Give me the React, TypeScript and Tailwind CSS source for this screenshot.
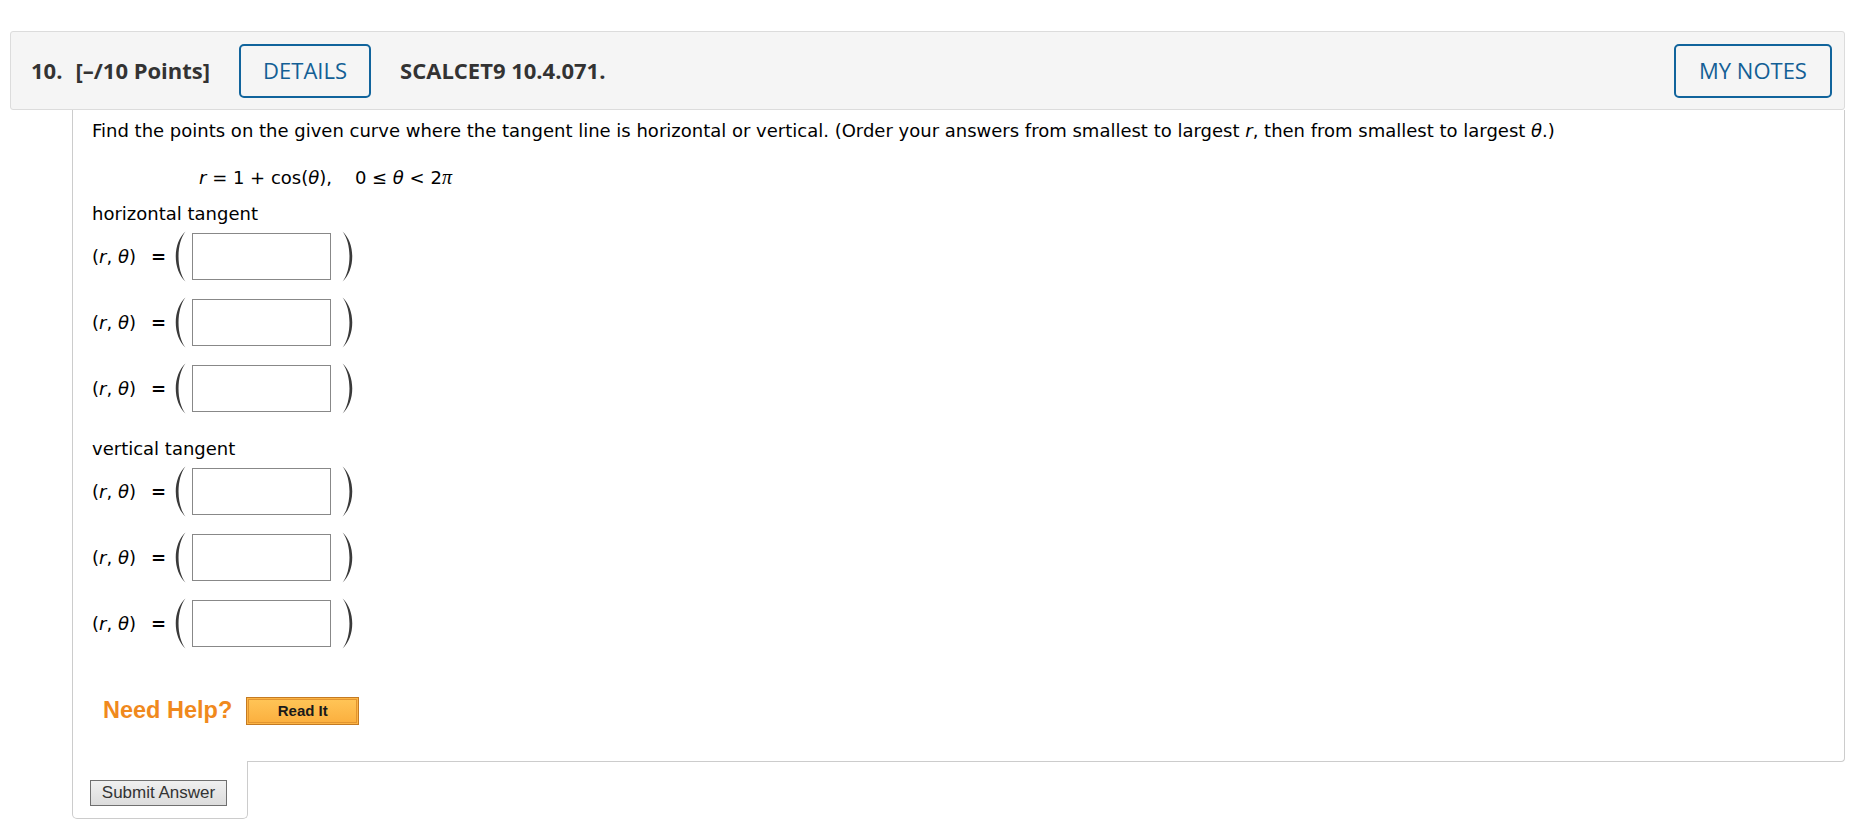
import React from 'react';

// Big stretchy parenthesis drawn as a crescent
const Paren: React.FC<{ side: 'left' | 'right' }> = ({ side }) => (
  <svg width="13" height="51" viewBox="0 0 13 51" className="shrink-0">
    <path
      d="M12.5 0.5 C -0.5 12 -0.5 39 12.5 50.5 C 3.2 39 3.2 12 12.5 0.5 Z"
      fill="#3a3a3a"
      transform={side === 'right' ? 'translate(13 0) scale(-1 1)' : undefined}
    />
  </svg>
);

const AnswerRow: React.FC = () => (
  <div className="flex h-[66px] items-center">
    <span className="w-[47px] whitespace-pre">
      (<i>r</i>, <i>θ</i>)
    </span>
    <span className="ml-[12px] w-[10px] font-bold">=</span>
    <span className="ml-[12px]">
      <Paren side="left" />
    </span>
    <input
      type="text"
      className="ml-[6px] h-[47px] w-[139px] border border-[#888] bg-white outline-none"
    />
    <span className="ml-[11px]">
      <Paren side="right" />
    </span>
  </div>
);

export default function App() {
  return (
    <div className="min-h-[827px] w-full bg-white pl-[10px] pr-[20px] pt-[31px]">
      {/* header bar */}
      <div className="flex h-[79px] items-center rounded-[3px] border border-[#dcdcdc] bg-[#f5f5f5] pl-[20px] pr-[12px] font-['Open_Sans',sans-serif] text-[22px] text-[#333]">
        <span className="font-bold">10.</span>
        <span className="ml-[13px] font-bold">[–/10 Points]</span>
        <button className="ml-[29px] h-[54px] w-[132px] rounded-[5px] border-2 border-[#11649c] font-medium text-[#135f95]">
          DETAILS
        </button>
        <span className="ml-[29px] font-bold">SCALCET9 10.4.071.</span>
        <button className="ml-auto h-[54px] w-[158px] rounded-[5px] border-2 border-[#11649c] font-medium text-[#135f95]">
          MY NOTES
        </button>
      </div>

      {/* question body */}
      <div className="ml-[62px] font-['DejaVu_Sans',sans-serif] text-[18px] text-black">
        <div className="rounded-br-[4px] border-x border-b border-[#cccccc] pb-[36px] pl-[19px] pt-[9px]">
          <p className="leading-[24px]">
            Find the points on the given curve where the tangent line is horizontal or vertical. (Order your answers
            from smallest to largest <i>r</i>, then from smallest to largest <i>θ</i>.)
          </p>

          <div className="ml-[107px] mt-[22px] whitespace-pre leading-[24px]">
            <i>r</i> = 1 + cos(<i>θ</i>),{'    '}0 ≤ <i>θ</i> {'<'} 2<i className="font-['Liberation_Serif',serif] text-[20px]">π</i>
          </div>

          <div className="mt-[12px] leading-[24px]">horizontal tangent</div>
          <div className="-mt-[3px]">
            <AnswerRow />
            <AnswerRow />
            <AnswerRow />
          </div>

          <div className="mt-[16px] leading-[24px]">vertical tangent</div>
          <div className="-mt-[3px]">
            <AnswerRow />
            <AnswerRow />
            <AnswerRow />
          </div>

          <div className="ml-[11px] mt-[41px] flex h-[28px] items-center">
            <span className="font-['Liberation_Sans',sans-serif] text-[23.5px] font-bold text-[#f0891d]">
              Need Help?
            </span>
            <button className="ml-[14px] h-[28px] w-[113px] border border-[#c47a22] bg-[#fcb546] p-[1px]">
              <span className="flex h-full w-full items-center justify-center border border-[#e2942f] bg-gradient-to-b from-[#ffc456] to-[#fbb03f] font-['Liberation_Sans',sans-serif] text-[15px] font-bold text-[#1a1a1a]">
                Read It
              </span>
            </button>
          </div>
        </div>

        {/* submit tab */}
        <div className="relative -mt-px w-[176px] rounded-b-[5px] border-x border-b border-[#cccccc] bg-white pb-[12px] pl-[17px] pt-[17px]">
          <button className="h-[26px] w-[137px] border border-[#6f6f6f] bg-gradient-to-b from-[#f0f0f0] to-[#dcdcdc] font-['Liberation_Sans',sans-serif] text-[17px] leading-none text-[#333]">
            Submit Answer
          </button>
        </div>
      </div>
    </div>
  );
}
